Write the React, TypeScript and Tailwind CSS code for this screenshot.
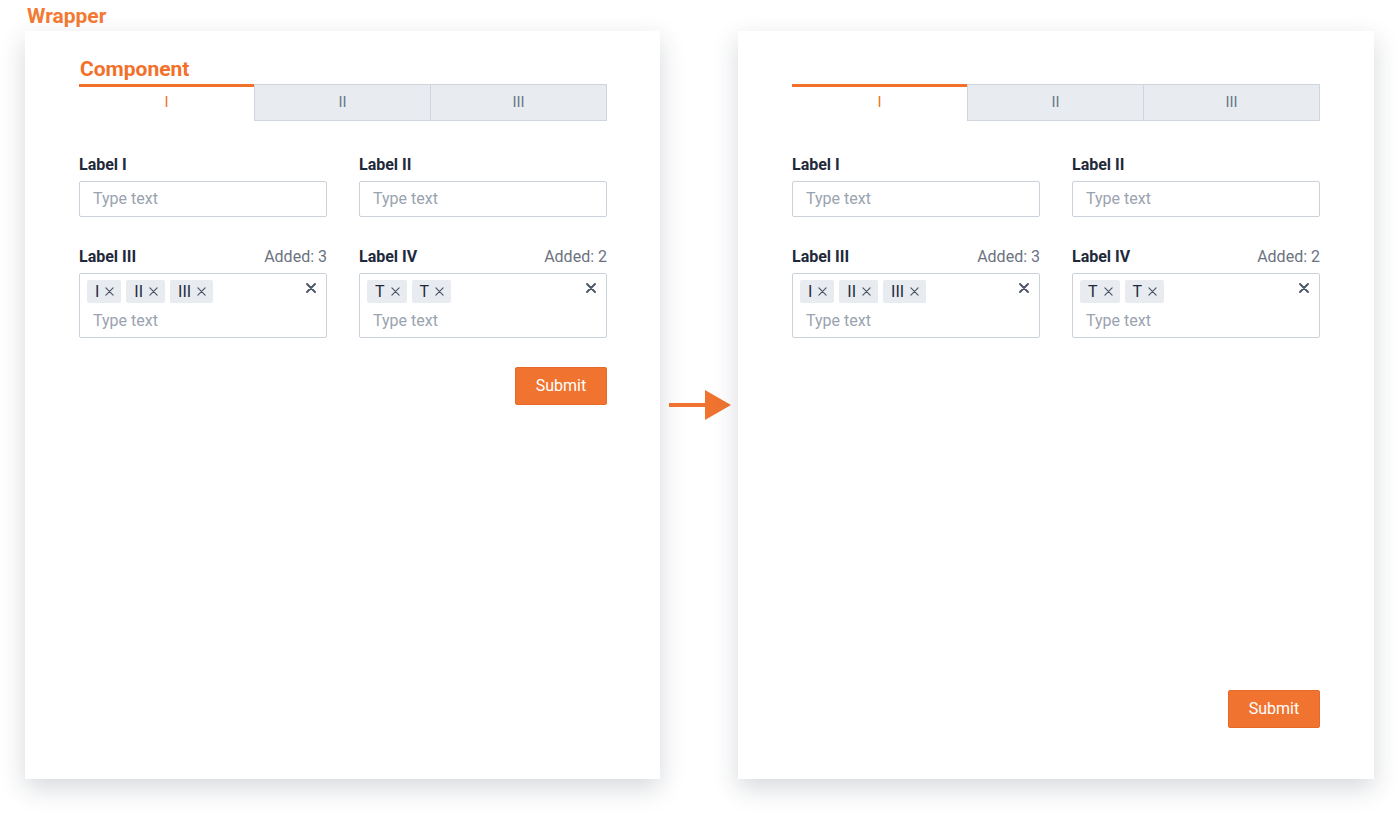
import React from "react";

const ORANGE = "#f2702a";

function XIcon({ size = 9, stroke = 1.6, className = "" }: { size?: number; stroke?: number; className?: string }) {
  return (
    <svg width={size} height={size} viewBox="0 0 10 10" className={className} fill="none">
      <path d="M1 1L9 9M9 1L1 9" stroke="currentColor" strokeWidth={stroke} strokeLinecap="round" />
    </svg>
  );
}

function Tabs() {
  return (
    <div className="flex h-[37px]">
      <div className="flex-1 flex items-center justify-center border-t-[3px] border-[#f2702a] bg-white text-[15px] text-[#f2702a] pb-[3px]">
        I
      </div>
      <div className="flex-1 flex items-center justify-center bg-[#e8ebf0] border border-[#cfd5de] text-[15px] text-[#6b7686]">
        II
      </div>
      <div className="flex-1 flex items-center justify-center bg-[#e8ebf0] border-y border-r border-[#cfd5de] text-[15px] text-[#6b7686]">
        III
      </div>
    </div>
  );
}

function TextField({ label }: { label: string }) {
  return (
    <div className="flex flex-col">
      <div className="h-[20px] pt-[2px] flex items-center text-[16px] font-bold text-[#1e293b]">{label}</div>
      <div className="mt-[7px] h-[36px] border border-[#cbd2dc] rounded-[2px] flex items-center px-[13px] text-[16px] text-[#9aa3b0]">
        Type text
      </div>
    </div>
  );
}

function TagField({ label, added, tags }: { label: string; added: number; tags: string[] }) {
  return (
    <div className="flex flex-col">
      <div className="h-[20px] pt-[2px] flex items-center justify-between">
        <span className="text-[16px] font-bold text-[#1e293b]">{label}</span>
        <span className="text-[16px] text-[#6b7280]">Added: {added}</span>
      </div>
      <div className="mt-[7px] h-[65px] border border-[#cbd2dc] rounded-[2px] relative px-[7px] pt-[6px]">
        <div className="flex gap-[5px]">
          {tags.map((t, i) => (
            <div
              key={i}
              className="h-[23px] bg-[#e8ebf0] rounded-[2px] pl-[8px] pr-[7px] flex items-center gap-[6px] text-[16px] text-[#1e293b]"
            >
              <span>{t}</span>
              <XIcon size={9} stroke={1.3} className="text-[#4b5563]" />
            </div>
          ))}
        </div>
        <div className="mt-[8px] pl-[6px] text-[16px] text-[#9aa3b0] leading-[20px]">Type text</div>
        <div className="absolute right-[10px] top-[9px] text-[#4b5567]">
          <XIcon size={10} stroke={1.9} />
        </div>
      </div>
    </div>
  );
}

function SubmitButton() {
  return (
    <button className="w-[92px] h-[38px] bg-[#f07430] border border-[#e8692a] rounded-[2px] text-white text-[16px]">
      Submit
    </button>
  );
}

function Fields() {
  return (
    <div className="grid grid-cols-2 gap-x-[32px] gap-y-[29px] mt-[33px]">
      <TextField label="Label I" />
      <TextField label="Label II" />
      <TagField label="Label III" added={3} tags={["I", "II", "III"]} />
      <TagField label="Label IV" added={2} tags={["T", "T"]} />
    </div>
  );
}

function Panel({ heading, pinned }: { heading: boolean; pinned: boolean }) {
  return (
    <div
      className={`${pinned ? "w-[636px] pr-[54px]" : "w-[635px] pr-[53px]"} h-[748px] bg-white shadow-[0_9px_24px_rgba(30,41,59,0.18)] flex flex-col pl-[54px] pt-[25px]`}
    >
      <div className="h-[28px] flex items-end pb-[2px]">
        {heading && (
          <span className="text-[21px] font-bold leading-[26px] pl-px" style={{ color: ORANGE }}>
            Component
          </span>
        )}
      </div>
      <Tabs />
      <Fields />
      {pinned ? (
        <div className="mt-auto mb-[51px] flex justify-end">
          <SubmitButton />
        </div>
      ) : (
        <div className="mt-[29px] flex justify-end">
          <SubmitButton />
        </div>
      )}
    </div>
  );
}

export default function App() {
  return (
    <div className="w-[1400px] h-[820px] bg-white relative" style={{ fontFamily: "Roboto, 'Liberation Sans', sans-serif" }}>
      <div className="h-[31px] pl-[27px] flex items-center">
        <span className="text-[21px] font-bold leading-[24px] text-[#f47a33]">Wrapper</span>
      </div>
      <div className="flex pl-[25px]">
        <Panel heading pinned={false} />
        <div className="w-[78px] flex items-center justify-center pl-[2px]">
          <svg width="62" height="30" viewBox="0 0 62 30">
            <rect x="0" y="13" width="38" height="4" fill="#f07430" />
            <polygon points="36,0 62,15 36,30" fill="#f07430" />
          </svg>
        </div>
        <Panel heading={false} pinned />
      </div>
    </div>
  );
}
